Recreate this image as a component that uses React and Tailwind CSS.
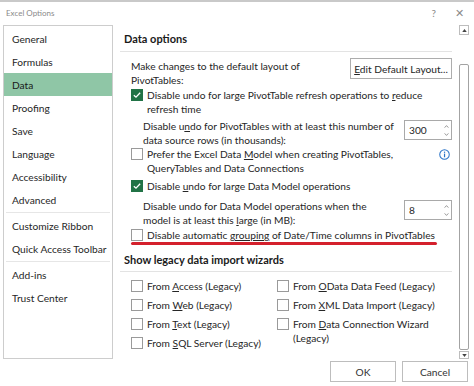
import { useState } from "react";

const navGroups = [
  ["General", "Formulas", "Data", "Proofing", "Save", "Language", "Accessibility", "Advanced"],
  ["Customize Ribbon", "Quick Access Toolbar"],
  ["Add-ins", "Trust Center"],
];

function CheckBox({ checked }) {
  if (checked) {
    return (
      <span className="mt-[1px] flex h-[12px] w-[12px] shrink-0 items-center justify-center bg-[#217346]">
        <svg viewBox="0 0 12 12" className="h-[10px] w-[10px]">
          <path d="M2.2 6.2 4.8 8.6 9.8 3.4" fill="none" stroke="#fff" strokeWidth="1.6" />
        </svg>
      </span>
    );
  }
  return <span className="mt-[1px] h-[12px] w-[12px] shrink-0 border border-[#9a9a9a] bg-white" />;
}

function Spin({ value }) {
  return (
    <div className="mt-[1px] flex h-[20px] w-[48px] shrink-0 items-center border border-[#a9a9a9] bg-white pl-[4px] pr-[2px]">
      <span className="flex-1">{value}</span>
      <div className="flex flex-col gap-[5px]">
        <svg viewBox="0 0 6 4" className="h-[3px] w-[5px]">
          <path d="M0.5 3.5 3 0.8 5.5 3.5" fill="none" stroke="#777" strokeWidth="1" />
        </svg>
        <svg viewBox="0 0 6 4" className="h-[3px] w-[5px]">
          <path d="M0.5 0.5 3 3.2 5.5 0.5" fill="none" stroke="#777" strokeWidth="1" />
        </svg>
      </div>
    </div>
  );
}

function Option({ checked, children, extra }) {
  return (
    <div className="flex gap-[4px] pl-[9px]">
      <CheckBox checked={checked} />
      <div className="flex-1 whitespace-nowrap">{children}</div>
      {extra}
    </div>
  );
}

const legacyLeft = [
  ["From ", "A", "ccess (Legacy)"],
  ["From ", "W", "eb (Legacy)"],
  ["From ", "T", "ext (Legacy)"],
  ["From ", "S", "QL Server (Legacy)"],
];
const legacyRight = [
  ["From ", "O", "Data Data Feed (Legacy)"],
  ["From ", "X", "ML Data Import (Legacy)"],
  ["From ", "D", "ata Connection Wizard", "(Legacy)"],
];

function LegacyItem({ parts }) {
  return (
    <div className="flex gap-[4px]">
      <CheckBox />
      <div className="whitespace-nowrap">
        {parts[0]}
        <u>{parts[1]}</u>
        {parts[2]}
        {parts[3] && (
          <>
            <br />
            {parts[3]}
          </>
        )}
      </div>
    </div>
  );
}

export default function App() {
  const [active] = useState("Data");

  return (
    <div className="flex h-[386px] w-[474px] flex-col overflow-hidden bg-white font-['Lato',sans-serif] text-[10.2px] leading-[14px] text-[#262626]">
      <div className="h-[2px] bg-[#c9c9c9]" />
      <div className="flex h-[22px] items-center pl-[6px] pr-[10px] text-[#8a8a8a]">
        <span className="text-[8px]">Excel Options</span>
        <span className="ml-auto text-[10px]">?</span>
        <span className="ml-[19px] text-[11px]">✕</span>
      </div>

      <div className="flex h-[335px]">
        <nav className="ml-[3px] mt-[1px] h-[334px] w-[110px] shrink-0 border border-[#cdcdcd] pt-[1px]">
          {navGroups.map((group, gi) => (
            <div key={gi}>
              {gi > 0 && <div className="mx-[2px] my-[1px] h-px bg-[#e6e6e6]" />}
              {group.map((item) => (
                <div
                  key={item}
                  className={`flex h-[23px] items-center whitespace-nowrap pl-[8px] ${
                    item === active ? "bg-[#8fc6a6] text-[#1a1a1a]" : ""
                  }`}
                >
                  {item}
                </div>
              ))}
            </div>
          ))}
        </nav>

        <div className="flex flex-1 pl-[9px] pr-[5px]">
          <div className="w-[330px] pt-[8px]">
            <div className="pl-[2px] text-[11px] font-bold text-[#1a1a1a]">Data options</div>
            <div className="-ml-[2px] mt-[5px] h-px bg-[#e3e3e3]" />

            <div className="mt-[7px] flex items-start pl-[9px]">
              <div className="flex-1">
                Make changes to the default layout of
                <br />
                PivotTables:
              </div>
              <button className="-mt-[1px] h-[21px] w-[102px] whitespace-nowrap border border-[#adadad] bg-white text-[10.2px] text-[#262626]">
                <u>E</u>dit Default Layout...
              </button>
            </div>

            <div className="mt-[1px]">
              <Option checked>
                Disable undo for large PivotTable refresh operations to <u>r</u>educe
                <br />
                refresh time
              </Option>
            </div>

            <div className="mt-[3px] flex pl-[21px]">
              <div className="flex-1 whitespace-nowrap">
                Disable u<u>n</u>do for PivotTables with at least this number of
                <br />
                data source rows (in thousands):
              </div>
              <Spin value="300" />
            </div>

            <Option
              extra={
                <svg viewBox="0 0 12 12" className="mr-[2px] mt-[2px] h-[11px] w-[11px] shrink-0">
                  <circle cx="6" cy="6" r="5.2" fill="none" stroke="#2b74c7" strokeWidth="1.1" />
                  <rect x="5.4" y="5" width="1.3" height="4" fill="#2b74c7" />
                  <rect x="5.4" y="2.9" width="1.3" height="1.3" fill="#2b74c7" />
                </svg>
              }
            >
              Prefer the Excel Data <u>M</u>odel when creating PivotTables,
              <br />
              QueryTables and Data Connections
            </Option>

            <div className="mt-[4px]">
              <Option checked>
                Disable <u>u</u>ndo for large Data Model operations
              </Option>
            </div>

            <div className="mt-[6px] flex pl-[21px]">
              <div className="flex-1 whitespace-nowrap">
                Disable undo for Data Model operations when the
                <br />
                model is at least this <u>l</u>arge (in MB):
              </div>
              <Spin value="8" />
            </div>

            <div className="mt-[1px]">
              <Option>
                Disable automatic <u>grouping</u> of Date/Time columns in PivotTables
              </Option>
            </div>
            <div className="ml-[9px] h-[3px] w-[306px] rounded-full bg-[#d4202c]" />

            <div className="mt-[8px] pl-[2px] text-[11px] font-bold text-[#1a1a1a]">
              Show legacy data import wizards
            </div>
            <div className="-ml-[2px] mt-[4px] h-px bg-[#e3e3e3]" />

            <div className="mt-[7px] grid grid-cols-[146px_1fr] pl-[9px]">
              <div className="flex flex-col gap-[5px]">
                {legacyLeft.map((p) => (
                  <LegacyItem key={p.join("")} parts={p} />
                ))}
              </div>
              <div className="flex flex-col gap-[5px]">
                {legacyRight.map((p) => (
                  <LegacyItem key={p.join("")} parts={p} />
                ))}
              </div>
            </div>
          </div>

          <div className="ml-[7px] mt-[1px] flex h-[334px] w-[10px] flex-col">
            <div className="flex h-[10px] items-center justify-center border border-[#bdbdbd]">
              <svg viewBox="0 0 6 4" className="h-[3px] w-[5px]">
                <path d="M0 4 3 0 6 4Z" fill="#444" />
              </svg>
            </div>
            <div className="mt-[29px] flex-1 rounded-[2px] border border-[#a3a3a3]" />
            <div className="mt-[1px] flex h-[8px] items-center justify-center border border-[#bdbdbd]">
              <svg viewBox="0 0 6 4" className="h-[3px] w-[5px]">
                <path d="M0 0 3 4 6 0Z" fill="#444" />
              </svg>
            </div>
          </div>
        </div>
      </div>

      <div className="flex justify-end gap-[6px] pr-[6px] pt-[2px]">
        <button className="h-[21px] w-[66px] border border-[#bdbdbd] bg-white text-[10.2px] text-[#333]">OK</button>
        <button className="h-[21px] w-[66px] border border-[#bdbdbd] bg-white text-[10.2px] text-[#333]">Cancel</button>
      </div>
    </div>
  );
}
